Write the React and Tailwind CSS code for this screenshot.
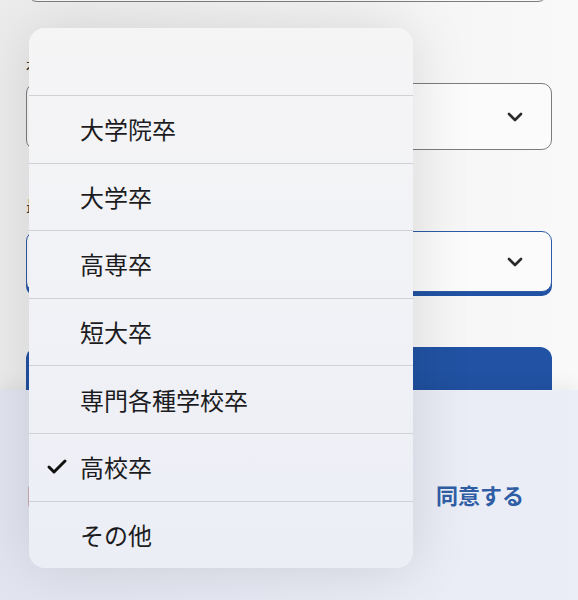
import { ChevronDown, Check } from "lucide-react";

const options = ["大学院卒", "大学卒", "高専卒", "短大卒", "専門各種学校卒", "高校卒", "その他"];

function SelectBox({ active }) {
  return (
    <div
      className={
        active
          ? "h-[61px] rounded-[10px] border-[1.5px] border-[#2d5aa6] bg-[#fbfbfb] shadow-[0_4px_0_#2152a3] flex items-center justify-end pr-[24px]"
          : "h-[67px] rounded-[10px] border-[1.5px] border-[#7c7c7c] bg-[#fbfbfb] flex items-center justify-end pr-[24px]"
      }
    >
      <ChevronDown size={24} strokeWidth={2.6} className="text-[#2a2a2a]" />
    </div>
  );
}

export default function App() {
  return (
    <div
      className="relative w-[578px] h-[600px] overflow-hidden bg-gradient-to-r from-[#ececec] to-[#f9f9f9]"
      style={{ fontFamily: '"Noto Sans CJK JP", "Noto Sans", sans-serif' }}
    >
      {/* form behind the picker */}
      <div className="px-[26px]">
        <div className="mt-[-62px] h-[64px] ml-[1px] mr-[4px] rounded-[10px] border-[1.5px] border-[#7c7c7c] bg-[#f8f8f8]" />
        <div className="mt-[52px] text-[16px] leading-[24px] text-[#333]">社員区分</div>
        <div className="mt-[5px]">
          <SelectBox />
        </div>
        <div className="mt-[43px] text-[16px] leading-[24px] text-[#333]">最終学歴</div>
        <div className="mt-[14px]">
          <SelectBox active />
        </div>
        <div className="mt-[55px] h-[70px] rounded-[12px] bg-[#2152a3]" />
      </div>

      {/* bottom sheet */}
      <div className="absolute left-0 right-0 top-[390px] bottom-0 bg-gradient-to-r from-[#e2e5f0] to-[#eceef7] shadow-[0_-6px_16px_rgba(0,0,0,0.05)]">
        <div className="flex items-center justify-between pl-[27px] pr-[54px] pt-[88px]">
          <span className="text-[22px] font-bold text-[#2f5ea5]">同意しない</span>
          <span className="text-[22px] font-bold text-[#2f5ea5]">同意する</span>
        </div>
      </div>

      {/* picker menu */}
      <div className="absolute left-[29px] top-[28px] w-[384px] rounded-[16px] overflow-hidden bg-gradient-to-b from-[#f5f5f6] via-[#f1f2f6] to-[#eceef6] shadow-[0_0_60px_rgba(0,0,0,0.12)]">
        <div className="h-[67px]" />
        {options.map((o) => (
          <div
            key={o}
            className="relative h-[67.6px] border-t border-[#d0d1d7] flex items-center pl-[51px] text-[24px] text-[#1c1c1e]"
          >
            {o === "高校卒" && (
              <Check size={24} strokeWidth={3} className="absolute left-[16px] text-[#111]" />
            )}
            {o}
          </div>
        ))}
      </div>
    </div>
  );
}
